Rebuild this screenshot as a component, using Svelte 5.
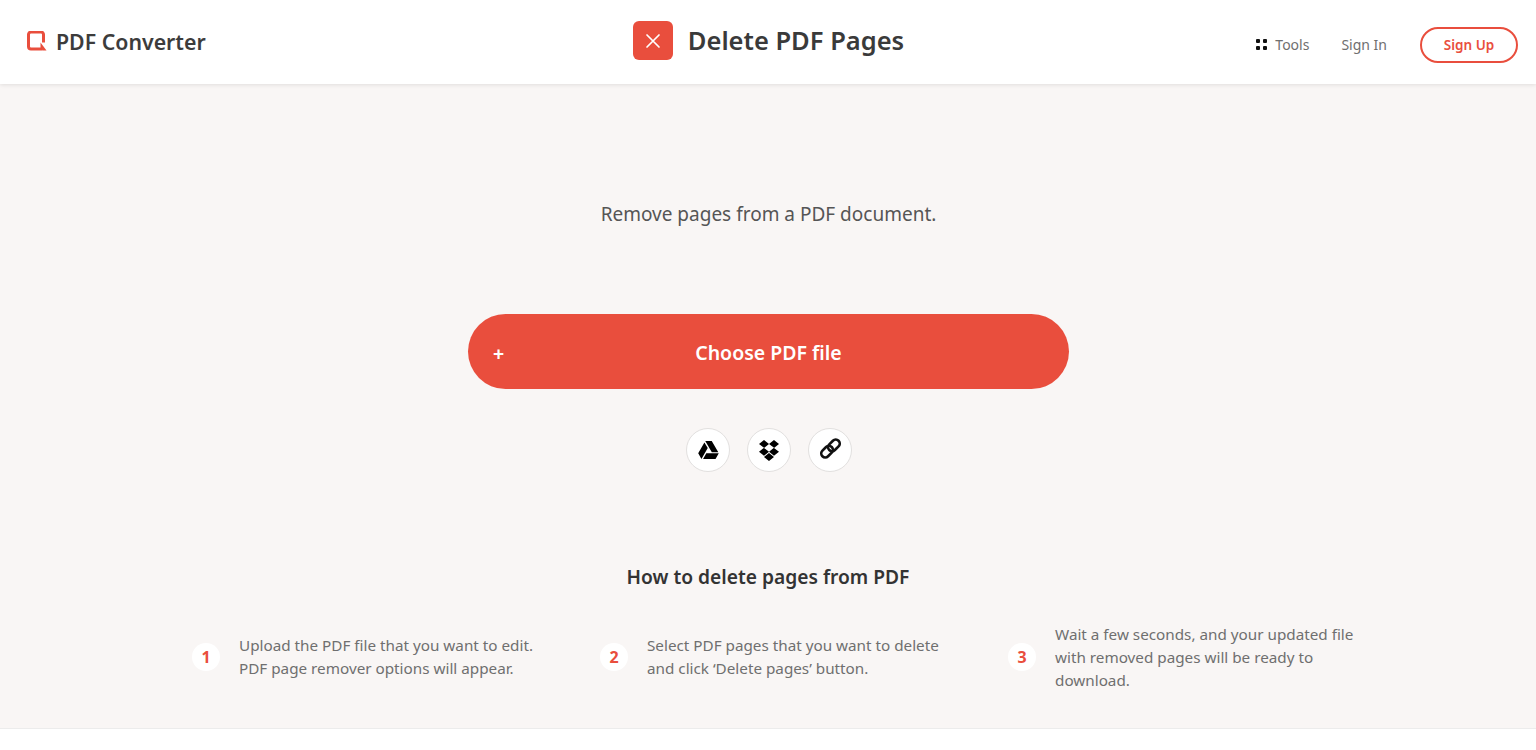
<script lang="ts">
  const steps = [
    { n: 1, lines: ['Upload the PDF file that you want to edit.', 'PDF page remover options will appear.'] },
    { n: 2, lines: ['Select PDF pages that you want to delete', 'and click ‘Delete pages’ button.'] },
    { n: 3, lines: ['Wait a few seconds, and your updated file', 'with removed pages will be ready to', 'download.'] }
  ];
</script>

<div class="page">
  <header class="top">
    <a class="brand" href="#home">
      <svg class="mark" viewBox="0 0 20 20" width="20" height="20" aria-hidden="true">
        <path d="M15.500 18H4a2.500 2.500 0 0 1-2.500-2.500v-12A2.500 2.500 0 0 1 4 1h10A2.500 2.500 0 0 1 16.500 3.500V11.500" fill="none" stroke="#e94e3d" stroke-width="3"/>
        <path d="M13.500 11.500l6 8h-3.800l-2.200-2.800z" fill="#e94e3d"/>
      </svg>
      <span>PDF Converter</span>
    </a>
    <div class="title">
      <span class="badge">
        <svg viewBox="0 0 16 16" width="16" height="16" aria-hidden="true">
          <path d="M2 2l12 12M14 2L2 14" stroke="#fff" stroke-width="1.700" stroke-linecap="round"/>
        </svg>
      </span>
      <h1>Delete PDF Pages</h1>
    </div>
    <nav class="links">
      <a class="tools" href="#tools"><i class="dots"><b></b><b></b><b></b><b></b></i>Tools</a>
      <a href="#signin">Sign In</a>
      <a class="signup" href="#signup">Sign Up</a>
    </nav>
  </header>

  <main>
    <p class="lead">Remove pages from a PDF document.</p>
    <button class="choose" type="button"><span class="plus">+</span>Choose PDF file</button>
    <div class="sources">
      <button type="button" aria-label="Google Drive">
        <svg viewBox="0 32 512 448" width="21" height="18"><path d="M339 314.900L175.400 32h161.200l163.600 282.900H339zm-137.500 23.600L120.900 480h310.500L512 338.500H201.500zM154.100 67.400L0 338.500 80.600 480 237 208.800 154.100 67.400z"/></svg>
      </button>
      <button type="button" aria-label="Dropbox">
        <svg viewBox="0 32 528 448" width="20" height="21" preserveAspectRatio="none"><path d="M264.400 116.300l-132 84.300 132 84.300-132 84.300L0 284.100l132.300-84.300L0 116.300 132.300 32l132.100 84.300zM131.600 395.700l132-84.300 132 84.300-132 84.300-132-84.300zm132.800-111.600l132-84.300-132-83.600L395.700 32 528 116.300l-132.300 84.300L528 284.800l-132.300 84.300-131.300-85z"/></svg>
      </button>
      <button type="button" aria-label="Link">
        <svg class="chain" viewBox="0 0 20 20" width="21" height="21" fill="none" stroke="#111" stroke-width="2.500">
          <rect x="0.500" y="9.200" width="12.500" height="7.600" rx="3.800" transform="rotate(-45 6.750 13)"/>
          <rect x="7" y="3.200" width="12.500" height="7.600" rx="3.800" transform="rotate(-45 13.250 7)"/>
        </svg>
      </button>
    </div>
    <h2>How to delete pages from PDF</h2>
    <ol class="steps">
      {#each steps as s}
        <li>
          <span class="num">{s.n}</span>
          <p>{#each s.lines as l}<span>{l}</span>{/each}</p>
        </li>
      {/each}
    </ol>
  </main>
</div>

<style>
  :global(body) {
    margin: 0;
    background: #fff;
    font-family: 'Noto Sans', 'Open Sans', sans-serif;
    color: #3a3a3a;
  }
  a {
    color: inherit;
    text-decoration: none;
  }
  .page {
    height: 750px;
    overflow: hidden;
  }
  .top {
    position: relative;
    display: grid;
    grid-template-columns: 1fr auto 1fr;
    align-items: center;
    height: 84px;
    padding: 0 18px 0 19px;
    background: #fff;
    box-shadow: 0 1px 4px rgba(0, 0, 0, 0.1);
  }
  .brand {
    display: flex;
    align-items: center;
    gap: 9px;
    margin: -2px 0 0 8px;
    font-size: 21.300px;
    font-weight: 600;
    color: #3c3c3c;
  }
  .title {
    display: flex;
    align-items: center;
    gap: 15px;
    margin-top: -3px;
  }
  .badge {
    display: flex;
    align-items: center;
    justify-content: center;
    width: 40px;
    height: 39px;
    border-radius: 6px;
    background: #e94e3d;
  }
  h1 {
    margin: -2px 0 0;
    font-size: 25.500px;
    font-weight: 600;
    color: #3a3a3a;
  }
  .links {
    display: flex;
    align-items: center;
    justify-content: flex-end;
    margin-top: 6px;
    font-size: 14px;
    color: #6f6f6f;
  }
  .links > a:not(.signup) {
    margin-top: -2px;
  }
  .tools {
    display: flex;
    align-items: center;
    gap: 8px;
    margin-right: 32px;
  }
  .dots {
    display: grid;
    grid-template-columns: 4px 4px;
    gap: 3px;
  }
  .dots b {
    height: 4px;
    background: #111;
    border-radius: 1px;
  }
  .signup {
    display: flex;
    align-items: center;
    justify-content: center;
    width: 94px;
    height: 32px;
    margin-left: 33px;
    border: 2px solid #e94e3d;
    border-radius: 18px;
    font-size: 13.500px;
    font-weight: 600;
    color: #e94e3d;
  }
  main {
    display: flex;
    flex-direction: column;
    align-items: center;
    height: 644px;
    border-bottom: 1px solid #ececec;
    background: #f9f6f5;
  }
  .lead {
    margin: 116px 0 0 1px;
    font-size: 19px;
    line-height: 28px;
    color: #555;
  }
  .choose {
    position: relative;
    width: 601px;
    height: 75px;
    margin: 86px 0 0 1px;
    padding-top: 2px;
    border: 0;
    border-radius: 38px;
    background: #e94e3d;
    color: #fff;
    font: 600 19.500px 'Noto Sans', sans-serif;
  }
  .plus {
    position: absolute;
    left: 25px;
    top: 27px;
    line-height: 25px;
    font-weight: 700;
  }
  .sources {
    display: flex;
    gap: 17px;
    margin: 39px 0 0 2px;
  }
  .sources button {
    display: flex;
    align-items: center;
    justify-content: center;
    width: 44px;
    height: 44px;
    padding: 0;
    border: 1px solid #e2e0df;
    border-radius: 50%;
    background: #fff;
  }
  .chain {
    margin-top: -4px;
  }
  h2 {
    margin: 92px 0 0;
    font-size: 19.200px;
    line-height: 26px;
    font-weight: 600;
    color: #333;
  }
  .steps {
    display: grid;
    grid-template-columns: repeat(3, 408px);
    align-self: flex-start;
    margin: 33px 0 0 192px;
    padding: 0;
    list-style: none;
  }
  .steps li {
    display: flex;
    align-items: center;
    gap: 19px;
    height: 68px;
  }
  .num {
    display: flex;
    align-items: center;
    justify-content: center;
    width: 28px;
    height: 28px;
    border-radius: 50%;
    background: #fff;
    color: #e94e3d;
    font-size: 16px;
    font-weight: 700;
  }
  .steps p {
    margin: 0;
    font-size: 15.250px;
    line-height: 23px;
    color: #6f6f6f;
  }
  .steps p span {
    display: block;
    white-space: nowrap;
  }
</style>
